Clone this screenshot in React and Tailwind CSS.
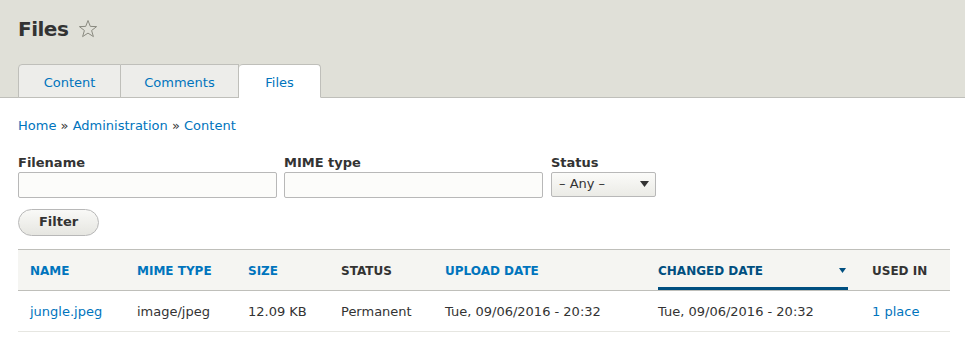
import React from "react";

function Star() {
  return (
    <svg width="20" height="20" viewBox="0 0 20 20" className="ml-[10px]">
      <path d="M10 1.5 L12.3 7.4 L18.6 7.6 L13.6 11.5 L15.4 17.6 L10 14.1 L4.6 17.6 L6.4 11.5 L1.4 7.6 L7.7 7.4 Z" fill="none" stroke="#8a8a80" strokeWidth="1" strokeLinejoin="round" />
    </svg>
  );
}

const th = "text-left font-bold uppercase text-[12px] pl-[12px]";

export default function App() {
  return (
    <div className="w-[965px] h-[359px] bg-white text-[13px] text-[#333] overflow-hidden font-['Lucida_Grande','DejaVu_Sans',Verdana,sans-serif]">
      <div className="bg-[#e0e0d8] border-b border-[#bfbfba] px-[18px] pt-[14px]">
        <div className="flex items-center h-[30px]">
          <h1 className="text-[20px] tracking-[-0.5px] font-bold text-[#333] leading-none">Files</h1>
          <Star />
        </div>
        <div className="flex mt-[20px] -mb-px">
          <div className="w-[103px] h-[34px] pt-[3px] bg-[#ededea] border border-[#bfbfba] rounded-tl-[4px] flex items-center justify-center text-[#0074bd]">Content</div>
          <div className="w-[118px] h-[34px] pt-[3px] bg-[#ededea] border border-l-0 border-[#bfbfba] flex items-center justify-center text-[#0074bd]">Comments</div>
          <div className="w-[82px] h-[34px] pt-[3px] bg-white border border-l-0 border-b-white border-[#bfbfba] rounded-t-[4px] flex items-center justify-center text-[#0074bd]">Files</div>
        </div>
      </div>
      <div className="px-[18px]">
        <div className="mt-[18px] text-[#0074bd]">
          <span>Home</span> <span className="text-[#333]">»</span> <span>Administration</span> <span className="text-[#333]">»</span> <span>Content</span>
        </div>
        <div className="flex mt-[17px] gap-[7px]">
          <div className="flex flex-col">
            <label className="font-bold text-[13px] leading-[19px]">Filename</label>
            <div className="w-[259px] h-[26px] border border-[#b8b8b8] rounded-[2px] bg-[#fcfcfa]" />
          </div>
          <div className="flex flex-col">
            <label className="font-bold text-[13px] leading-[19px]">MIME type</label>
            <div className="w-[259px] h-[26px] border border-[#b8b8b8] rounded-[2px] bg-[#fcfcfa]" />
          </div>
          <div className="flex flex-col ml-[1px]">
            <label className="font-bold text-[13px] leading-[19px]">Status</label>
            <div className="w-[105px] h-[25px] border border-[#b8b8b8] rounded-[2px] bg-gradient-to-b from-[#fbfbf9] to-[#ebebe6] flex items-center justify-between pl-[7px] pr-[6px] text-[#333]">
              <span>– Any –</span>
              <svg width="9" height="6" viewBox="0 0 9 6"><path d="M0 0 H9 L4.5 6 Z" fill="#333" /></svg>
            </div>
          </div>
        </div>
        <div className="mt-[11px] w-[81px] h-[27px] rounded-full border border-[#b8b8b8] bg-gradient-to-b from-[#f9f9f7] to-[#e6e6e1] flex items-center justify-center font-bold text-[#333]">Filter</div>
        <table className="mt-[13px] w-[932px] border-collapse table-fixed">
          <colgroup>
            <col className="w-[107px]" />
            <col className="w-[111px]" />
            <col className="w-[93px]" />
            <col className="w-[104px]" />
            <col className="w-[213px]" />
            <col className="w-[214px]" />
            <col className="w-[90px]" />
          </colgroup>
          <thead>
            <tr className="bg-[#f5f5f2] border-t border-b border-[#bfbfba] h-[41px]">
              <th className={th + " text-[#0074bd] pt-[2px]"}>Name</th>
              <th className={th + " text-[#0074bd] pt-[2px]"}>MIME type</th>
              <th className={th + " text-[#0074bd] pt-[2px]"}>Size</th>
              <th className={th + " text-[#333] pt-[2px]"}>Status</th>
              <th className={th + " text-[#0074bd] pt-[2px]"}>Upload date</th>
              <th className={th + " pr-[12px] py-0"}>
                <div className="flex items-center justify-between h-[40px] border-b-[3px] border-[#004f80] text-[#004f80] pt-[5px]">
                  <span>Changed date</span>
                  <svg width="7" height="5" viewBox="0 0 7 5" className="mr-[2px]"><path d="M0 0 H7 L3.5 5 Z" fill="#004f80" /></svg>
                </div>
              </th>
              <th className={th + " text-[#333] pt-[2px]"}>Used in</th>
            </tr>
          </thead>
          <tbody>
            <tr className="border-b border-[#e6e6e1] h-[41px]">
              <td className="pl-[12px] pt-[2px] text-[#0074bd]">jungle.jpeg</td>
              <td className="pl-[12px] pt-[2px]">image/jpeg</td>
              <td className="pl-[12px] pt-[2px]">12.09 KB</td>
              <td className="pl-[12px] pt-[2px]">Permanent</td>
              <td className="pl-[12px] pt-[2px]">Tue, 09/06/2016 - 20:32</td>
              <td className="pl-[12px] pt-[2px]">Tue, 09/06/2016 - 20:32</td>
              <td className="pl-[12px] pt-[2px] text-[#0074bd]">1 place</td>
            </tr>
          </tbody>
        </table>
      </div>
    </div>
  );
}
